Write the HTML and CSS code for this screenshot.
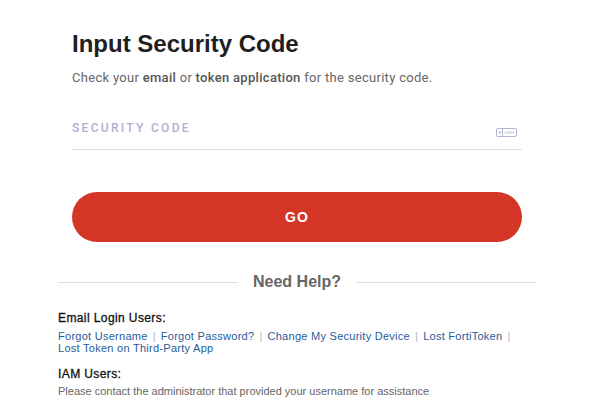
FILE: index.html
```html
<!DOCTYPE html>
<html>

<head>
    <title>Input Security Code</title>
    <link rel="stylesheet" href="styles.css">
</head>

<body>
    <div class="page">
        <div class="form-area">
            <h1 class="title">Input Security Code</h1>
            <p class="subtitle">Check your <b>email</b> or <b>token application</b> for the security code.</p>

            <div class="code-field">
                <span class="code-label">SECURITY CODE</span>
                <svg class="token-icon" width="21" height="9" viewBox="0 0 21 9" fill="none" xmlns="http://www.w3.org/2000/svg">
                    <rect x="0.5" y="0.5" width="20" height="8" rx="1.5" stroke="#b3b5d2" />
                    <path d="M6.5 1V8" stroke="#b3b5d2" />
                    <rect x="3" y="3.5" width="2" height="2" fill="#b3b5d2" />
                    <path d="M9 4.5H18" stroke="#c4c6dc" stroke-width="2" stroke-dasharray="1 0.6" />
                </svg>
            </div>

            <button class="go-btn">GO</button>
        </div>

        <div class="help-head">
            <span class="help-line"></span>
            <span class="help-title">Need Help?</span>
            <span class="help-line"></span>
        </div>

        <div class="help-block">
            <h3>Email Login Users:</h3>
            <div class="help-links">
                <a href="#">Forgot Username</a><span class="sep">|</span><a href="#">Forgot Password?</a><span class="sep">|</span><a href="#">Change My Security Device</a><span class="sep">|</span><a href="#">Lost FortiToken</a><span class="sep">|</span><br>
                <a href="#">Lost Token on Third-Party App</a>
            </div>
        </div>

        <div class="help-block iam">
            <h3>IAM Users:</h3>
            <p>Please contact the administrator that provided your username for assistance</p>
        </div>
    </div>
</body>

</html>
```

FILE: styles.css
```css
* {
    box-sizing: border-box;
    margin: 0;
    padding: 0;
}

html,
body {
    height: 420px;
    overflow: hidden;
    background: #ffffff;
}

body {
    font-family: "Liberation Sans", Arial, sans-serif;
}

.page {
    width: 595px;
    padding: 29px 59px 0 58px;
}

.form-area {
    padding: 0 14px;
}

.title {
    font-family: "Liberation Sans", Arial, sans-serif;
    font-size: 24px;
    font-weight: 700;
    line-height: 30px;
    color: #1f1f1f;
}

.subtitle {
    margin-top: 10px;
    font-family: Roboto, "Liberation Sans", sans-serif;
    font-size: 13px;
    line-height: 17px;
    letter-spacing: 0.3px;
    color: #666666;
}

.subtitle b {
    font-weight: 500;
    color: #555555;
}

/* code input */
.code-field {
    display: flex;
    justify-content: space-between;
    align-items: flex-start;
    height: 35px;
    margin-top: 29px;
    padding-top: 7px;
    border-bottom: 1px solid #dcdcea;
}

.code-label {
    font-family: Roboto, "Liberation Sans", sans-serif;
    font-size: 12px;
    font-weight: 500;
    line-height: 13px;
    letter-spacing: 2.3px;
    color: #b0b0d0;
}

.token-icon {
    margin-top: 6px;
    margin-right: 5px;
}

.go-btn {
    display: block;
    width: 100%;
    height: 50px;
    margin-top: 42px;
    border: none;
    border-radius: 25px;
    background-color: #d33526;
    color: #ffffff;
    font-family: "Liberation Sans", Arial, sans-serif;
    font-size: 14px;
    font-weight: 700;
    letter-spacing: 1.2px;
    cursor: pointer;
}

/* help */
.help-head {
    display: flex;
    align-items: center;
    gap: 15px;
    margin-top: 30px;
}

.help-line {
    flex: 1;
    height: 1px;
    background: #dcdcee;
}

.help-title {
    font-size: 16px;
    font-weight: 700;
    line-height: 20px;
    color: #666666;
}

.help-block {
    margin-top: 19px;
}

.help-block h3 {
    font-size: 12px;
    font-weight: 400;
    line-height: 14px;
    letter-spacing: 0.4px;
    color: #111111;
    -webkit-text-stroke: 0.3px #111111;
}

.help-links {
    margin-top: 5px;
    font-size: 11px;
    line-height: 12px;
    letter-spacing: 0.27px;
}

.help-links a {
    color: #1f5c99;
    text-decoration: none;
}

.sep {
    margin: 0 5px;
    color: #a9b4cf;
}

.iam {
    margin-top: 13px;
}

.iam p {
    margin-top: 4px;
    font-size: 11px;
    line-height: 13px;
    color: #666666;
}
```
